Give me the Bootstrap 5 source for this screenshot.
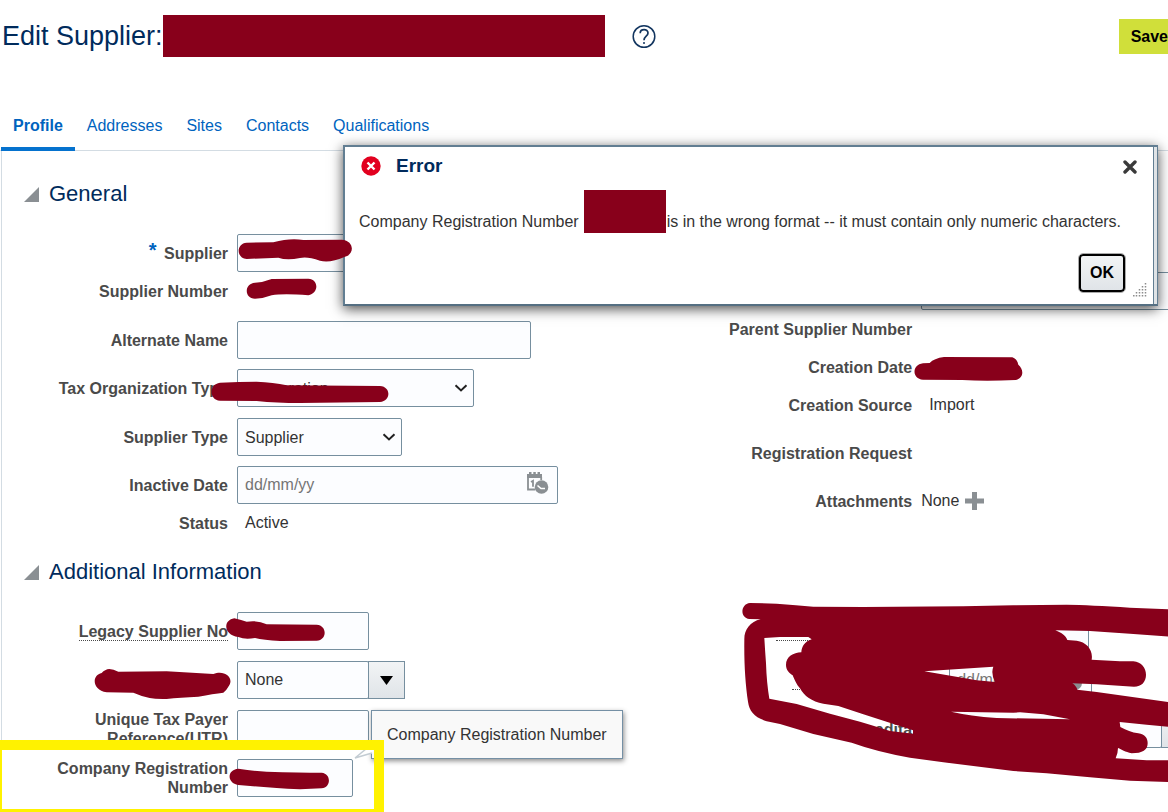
<!DOCTYPE html>
<html lang="en">
<head>
<meta charset="utf-8">
<meta name="viewport" content="width=device-width, initial-scale=1">
<title>Edit Supplier</title>
<link href="https://cdn.jsdelivr.net/npm/bootstrap@5.3.0/dist/css/bootstrap.min.css" rel="stylesheet">
<style>
  :root { --ink: #333; --navy: #002b5c; --line: #768f9f; --mark: #88001b; --rule: #d3dce3; }
  body { font-family: "Liberation Sans", Arial, sans-serif; font-size: 16px; line-height: 24px; color: var(--ink); background: #fff; overflow-x: hidden; }
  .top-bar { padding: 15px 0 0 2px; }
  .page-title { font-size: 27px; line-height: 42px; color: var(--navy); font-weight: 400; }
  .name-block { width: 442px; height: 42px; background: var(--mark); }
  .help-btn { width: 26px; height: 26px; margin-left: 26px; }
  .save-btn { background: #d0df3a; color: #000; font-weight: 700; border: 0; border-radius: 0; height: 35px; line-height: 24px; padding: 6px 0 5px 12px; }
  .tab-strip { margin-top: 43px; padding-left: 1px; box-shadow: inset 0 -1px 0 var(--rule); }
  .tab-strip .nav-link { color: #0063be; padding: 14px 12px 9px; border-bottom: 4px solid transparent; line-height: 24px; }
  .tab-strip .nav-link.active { font-weight: 700; border-color: #0572ce; }
  .panel { border-left: 1px solid var(--rule); margin-left: 1px; padding: 23px 0 16px; }
  .section-title { font-size: 22px; line-height: 40px; color: var(--navy); font-weight: 400; margin: 0 0 20px; padding-left: 22px; gap: 10px; }
  .f-row { display: flex; position: relative; min-height: 38px; column-gap: 9px; align-items: center; }
  .f-row > .f-label { flex: 0 0 226px; text-align: right; font-weight: 700; color: #4a4a4a; line-height: 19px; }
  .side .f-row > .f-label { flex-basis: 230px; }
  .f-row + .gap-top { margin-top: 10px; }
  .lower .f-row + .gap-top, .main-col .f-row + .gap-top:nth-child(odd) { margin-top: 11px; }
  .hinted { border-bottom: 1px dotted #4a4a4a; }
  .star { color: #0063be; font-size: 20px; line-height: 12px; margin-right: 3px; vertical-align: 2px; }
  .box { height: 38px; border: 1px solid var(--line); border-radius: 2px; background-color: #fcfdff; color: var(--ink); padding: 0 7px; font-size: 16px; line-height: 24px; flex: 0 0 auto; }
  .box::placeholder { color: #757575; }
  select.box { background-image: url("data:image/svg+xml,%3Csvg xmlns='http://www.w3.org/2000/svg' viewBox='0 0 14 8'%3E%3Cpath d='M1.5 1.2 7 6.4 12.5 1.2' fill='none' stroke='%23222' stroke-width='2'/%3E%3C/svg%3E"); background-size: 14px 8px; background-position: right 5px center; padding: 2px 24px 0 7px; }
  .w-xl { width: 321px; } .w-lg { width: 294px; } .w-md { width: 237px; } .w-sm { width: 165px; } .w-xs { width: 132px; } .w-co { width: 116px; }
  .drop { width: 37px; height: 38px; margin-left: -1px; border: 1px solid var(--line); background: linear-gradient(#f2f4f5, #e0e4e8); padding: 0; }
  .date-wrap { position: relative; flex: 0 0 auto; }
  .date-wrap svg { position: absolute; right: 9px; top: 5px; }
  .mark-over { position: absolute; fill: var(--mark); z-index: 20; pointer-events: none; }
  .at-supplier { left: 236px; top: 4px; } .at-number { left: 244px; top: 6px; } .at-tax { left: 209px; top: 12px; }
  .at-legacy { left: 224px; top: 6px; } .at-label { left: 92px; top: 7px; } .at-company { left: 227px; top: 9px; }
  .at-date { left: 232px; top: 8px; } .at-side { left: 48px; top: -22px; }
  .highlight { position: absolute; left: -2px; top: -19px; width: 384px; height: 73px; border: solid #fff200; border-width: 10px 10px 4px 2px; z-index: 15; pointer-events: none; }
  .hint { position: absolute; left: 369px; top: -49px; width: 252px; height: 49px; padding: 12px 15px; line-height: 24px; background: #f9f9f9; border: 1px solid #7590a5; box-shadow: 1px 2px 5px rgba(0,0,0,.45); z-index: 5; white-space: nowrap; }
  .hint svg { position: absolute; left: -18px; bottom: -2px; }
  .error-box { position: absolute; top: 145px; right: 10px; width: 815px; max-width: 100%; border: 2px solid #627e92; border-right-width: 1px; border-bottom-color: #556f82; background: #dfe3e6; padding-right: 3px; z-index: 10; box-shadow: 0 3px 12px rgba(0,0,0,.7); }
  .error-inner { background: #fff; border-right: 1px solid #627e92; padding: 0 28px 12px 14px; position: relative; }
  .error-title { font-size: 19px; line-height: 38px; color: var(--navy); font-weight: 700; margin: 0 0 0 13px; }
  .message { min-height: 43px; margin-top: 5px; gap: 1px; line-height: 22px; }
  .number-block { width: 82px; height: 43px; background: var(--mark); flex: none; }
  .ok-btn { width: 46px; height: 38px; margin-top: 21px; border: 2px solid #000; outline: 1px solid #aaa; border-radius: 4px; background: linear-gradient(#f2f4f5, #e0e4e8); font-weight: 700; color: #000; padding: 0; }
  .close-x { margin-right: -12px; width: 14px; height: 40px; margin-bottom: -2px; }
  .grip { position: absolute; right: 6px; bottom: 7px; }
</style>
</head>
<body>
<div class="position-relative">
<header class="top-bar d-flex align-items-center">
  <h1 class="page-title m-0 text-nowrap">Edit Supplier:</h1>
  <span class="name-block" role="img" aria-label="Supplier name hidden"></span>
  <button type="button" class="help-btn btn p-0 border-0 d-flex" aria-label="Help">
    <svg width="26" height="26" viewBox="0 0 26 26" fill="none" stroke="#12355f"><circle cx="13" cy="13.500" r="10.800" stroke-width="1.500"/><path d="M9.200 10.200C9.200 5.300 17 5.500 17 10c0 3.200-4 3.200-4 7.200" stroke-width="1.700"/><circle cx="13" cy="20" r="1" fill="#12355f" stroke="none"/></svg>
  </button>
  <button type="button" class="save-btn ms-auto">Save</button>
</header>

<ul class="nav tab-strip">
  <li class="nav-item"><a class="nav-link active" aria-current="page" href="#">Profile</a></li>
  <li class="nav-item"><a class="nav-link" href="#">Addresses</a></li>
  <li class="nav-item"><a class="nav-link" href="#">Sites</a></li>
  <li class="nav-item"><a class="nav-link" href="#">Contacts</a></li>
  <li class="nav-item"><a class="nav-link" href="#">Qualifications</a></li>
</ul>

<main class="panel">
  <section>
    <h2 class="section-title d-flex align-items-center"><svg width="15" height="15" viewBox="0 0 15 15"><path d="M15 0v15H0z" fill="#8a8f93"/></svg>General</h2>
    <div class="row g-0">
      <div class="col-7 main-col">
        <div class="f-row">
          <label class="f-label" for="supplier"><span class="star">*</span> Supplier</label>
          <input id="supplier" class="box w-lg" type="text">
          <svg class="mark-over at-supplier" width="114" height="24" viewBox="714 204 342 72"><path d="M740 218L820 217Q870 203 910 210L1025 209C1065 212 1063 255 1035 260Q990 280 960 272Q920 258 900 264Q860 272 835 263L740 267C708 265 708 220 740 218Z"/></svg>
        </div>
        <div class="f-row">
          <span class="f-label">Supplier Number</span>
          <svg class="mark-over at-number" width="71" height="21" viewBox="738 324 213 63"><path d="M765 338Q790 337 815 327L925 326C957 328 957 370 925 376Q850 370 815 376Q790 386 765 386C732 386 732 340 765 338Z"/></svg>
        </div>
        <div class="f-row gap-top">
          <label class="f-label" for="alt">Alternate Name</label>
          <input id="alt" class="box w-lg" type="text">
        </div>
        <div class="f-row gap-top">
          <label class="f-label" for="tax">Tax Organization Type</label>
          <select id="tax" class="form-select box w-md"><option>Corporation</option></select>
          <svg class="mark-over at-tax" width="178" height="22" viewBox="633 633 534 66"><path d="M660 638Q720 635 770 635Q820 637 860 646L1140 648C1175 650 1172 695 1140 696L900 699Q830 699 770 693L660 692C626 690 626 642 660 638Z"/></svg>
        </div>
        <div class="f-row gap-top">
          <label class="f-label" for="stype">Supplier Type</label>
          <select id="stype" class="form-select box w-sm"><option>Supplier</option></select>
        </div>
        <div class="f-row gap-top">
          <label class="f-label" for="inactive">Inactive Date</label>
          <div class="date-wrap">
            <input id="inactive" class="box w-xl" type="text" placeholder="dd/mm/yy">
            <svg width="23" height="24" viewBox="0 0 23 24"><path d="M2 5v13.500h7M15.200 6v3" fill="none" stroke="#8a8f93" stroke-width="1.800"/><path d="M1 3h15v4H1zM3 1h2.500v3H3zM7.300 1h2.500v3H7.300zM11.500 1H14v3h-2.500z" fill="#8a8f93"/><path d="M5 11 7 9.800v6" fill="none" stroke="#8a8f93" stroke-width="1.800"/><circle cx="15.500" cy="16" r="6.800" fill="#8a8f93"/><path d="M11.500 14.500 15 17.500h4" fill="none" stroke="#fff" stroke-width="1.600"/></svg>
          </div>
        </div>
        <div class="f-row">
          <span class="f-label">Status</span><span class="ps-2">Active</span>
        </div>
      </div>
      <div class="col-5 side">
        <div class="f-row"></div>
        <div class="f-row">
          <span class="f-label"></span>
          <input class="box w-lg" type="text" aria-label="Parent supplier">
        </div>
        <div class="f-row"><span class="f-label">Parent Supplier Number</span></div>
        <div class="f-row">
          <span class="f-label">Creation Date</span>
          <svg class="mark-over at-date" width="109" height="25" viewBox="645 165 327 75"><path d="M672 187L692 186Q705 172 735 168L940 169Q955 175 958 191C975 205 975 232 950 237Q860 242 790 237L672 236C638 232 638 192 672 187Z"/></svg>
        </div>
        <div class="f-row"><span class="f-label">Creation Source</span><span class="ps-2">Import</span></div>
        <div class="f-row gap-top"><span class="f-label">Registration Request</span></div>
        <div class="f-row gap-top">
          <span class="f-label">Attachments</span><span class="d-flex align-items-center gap-1">None
          <button type="button" class="btn p-0 border-0 d-flex" aria-label="Add attachment"><svg width="22" height="20" viewBox="0 0 22 20"><path d="M2 7.500h7V1h5v6.500h7v5h-7V19H9v-6.500H2z" fill="#8a8f93"/></svg></button></span>
        </div>
      </div>
    </div>
  </section>

  <section class="lower" style="margin-top: 10px">
    <h2 class="section-title d-flex align-items-center"><svg width="15" height="15" viewBox="0 0 15 15"><path d="M15 0v15H0z" fill="#8a8f93"/></svg>Additional Information</h2>
    <div class="row g-0">
      <div class="col-7">
        <div class="f-row">
          <label class="f-label" for="legacy"><span class="hinted">Legacy Supplier No</span></label>
          <input id="legacy" class="box w-xs" type="text">
          <svg class="mark-over at-legacy" width="99" height="23" viewBox="678 234 297 69"><path d="M703 235Q725 240 740 245Q775 240 800 253L950 254C982 256 982 300 950 302L840 303Q790 300 765 294Q735 300 715 291C670 285 668 240 703 235Z"/></svg>
        </div>
        <div class="f-row gap-top">
          <span class="f-label"></span>
          <div class="d-flex">
            <input class="box w-xs" type="text" value="None" aria-label="Hidden field">
            <button type="button" class="drop" aria-label="Show choices"><svg width="13" height="9" viewBox="0 0 13 9"><path d="M0 0h13L6.500 9z"/></svg></button>
          </div>
          <svg class="mark-over at-label" width="137" height="32" viewBox="282 384 411 96"><path d="M305 399Q315 388 328 387Q340 388 355 395L500 394L640 402C675 388 705 415 685 440Q680 450 670 458Q640 461 595 470Q540 472 500 477Q450 480 400 458L320 457C275 450 275 405 305 399Z"/></svg>
        </div>
        <div class="f-row gap-top">
          <label class="f-label" for="utr">Unique Tax Payer Reference(UTR)</label>
          <input id="utr" class="box w-xs" type="text">
        </div>
        <div class="f-row gap-top">
          <label class="f-label" for="company">Company Registration Number</label>
          <input id="company" class="box w-co" type="text">
          <div class="hint" role="tooltip">Company Registration Number
            <svg width="20" height="12" viewBox="0 0 20 12"><path d="M20 1H12L1 10 18 5" fill="#fff" stroke="#c3ccd3" stroke-width="1.500"/></svg>
          </div>
          <div class="highlight"></div>
          <svg class="mark-over at-company" width="100" height="22" viewBox="687 681 300 66"><path d="M715 683Q760 690 800 692Q900 695 965 695C995 698 993 740 965 742L900 745Q860 743 830 741L715 732C680 726 680 686 715 683Z"/></svg>
        </div>
      </div>
      <div class="col-5 side position-relative">
        <div class="f-row">
          <span class="f-label"><span class="hinted d-inline-block" style="width: 136px">&nbsp;</span></span>
          <input class="box" style="width: 168px" type="text" aria-label="Hidden text">
        </div>
        <div class="f-row gap-top">
          <span class="f-label"><span class="hinted d-inline-block" style="width: 120px">&nbsp;</span></span>
          <div class="date-wrap" style="margin-left: 28px">
            <input class="box" style="width: 143px" type="text" placeholder="dd/mm/yy" aria-label="Hidden date">
            <svg width="23" height="24" viewBox="0 0 23 24"><circle cx="15" cy="17" r="7" fill="#8a8f93"/></svg>
          </div>
        </div>
        <div class="f-row gap-top">
          <span class="f-label">edita</span>
          <div class="d-flex"><input class="box" style="width: 241px" type="text" aria-label="Hidden choice"><button type="button" class="drop" aria-label="Show choices"></button></div>
        </div>
        <svg class="mark-over at-side" width="438" height="222" viewBox="0 0 1314 666"><path fill-rule="evenodd" d="M60 39L140 41Q200 46 250 50L400 51L700 49L850 46L1010 44Q1080 45 1200 53L1320 58V140L1200 131L1080 123L976 121C995 128 1008 138 1012 150L1040 152C1070 156 1090 180 1085 209L1170 214L1210 214C1235 216 1248 235 1248 254C1248 275 1235 290 1212 290L1100 283L1027 280C1035 285 1040 292 1042 299L1100 306L1320 337V411L1250 404L1169 396L1171 411C1190 420 1205 428 1225 430C1245 432 1253 445 1253 460C1253 480 1238 490 1205 490C1185 486 1175 478 1164 474Q1164 490 1157 505L1250 511H1320V576L1200 572L1080 562L950 550L850 543L640 517L540 503Q440 485 365 458L250 432L150 402L110 394C75 382 58 365 54 335C46 280 42 220 43 150C42 120 60 95 92 88L58 87C30 85 30 42 60 39Z
          M103 144L150 141H235L245 148C225 155 215 168 214 187C190 188 168 200 168 225C168 240 178 250 188 256C193 268 200 285 210 295C222 318 245 335 280 341L325 348L400 373L500 405L549 421V431L480 423L425 406L390 395L300 371L200 342L118 326Q110 280 108 220Q105 180 103 144Z
          M583 244L790 230Q782 250 795 276L740 271Z
          M663 365L850 368L870 367L940 373L1020 388L800 384Q720 378 663 365Z"/></svg>
      </div>
    </div>
  </section>
</main>

<div class="error-box" role="dialog" aria-labelledby="errTitle">
  <div class="error-inner">
    <div class="d-flex align-items-center">
      <svg width="24" height="24" viewBox="0 0 24 24"><circle cx="12" cy="12" r="9.700" fill="#e2001f"/><path d="M8.500 8.500l7 7M15.500 8.500l-7 7" stroke="#fff" stroke-width="2.400"/></svg>
      <h2 id="errTitle" class="error-title text-nowrap">Error</h2>
      <button type="button" class="close-x btn p-0 border-0 ms-auto d-flex align-items-center" aria-label="Close"><svg width="14" height="14" viewBox="0 0 14 14"><path d="M2 2l10 10M12 2L2 12" stroke="#3a3a3a" stroke-width="3.400" stroke-linecap="round"/></svg></button>
    </div>
    <div class="message d-flex align-items-end text-nowrap">
      <span>Company Registration Number</span><span class="number-block ms-1" role="img" aria-label="Number hidden"></span><span>is in the wrong format -- it must contain only numeric characters.</span>
    </div>
    <div class="d-flex justify-content-end"><button type="button" class="ok-btn">OK</button></div>
    <svg class="grip" width="14" height="14" viewBox="0 0 14 14"><path d="M12.500 0v14M9.500 3v11M6.500 6v8M3.500 9v5M.8 12v2" stroke="#8c8c8c" stroke-width="1.500" stroke-dasharray="1.500 1.500"/></svg>
  </div>
</div>
</div>
<script src="https://cdn.jsdelivr.net/npm/bootstrap@5.3.0/dist/js/bootstrap.bundle.min.js"></script>
</body>
</html>
